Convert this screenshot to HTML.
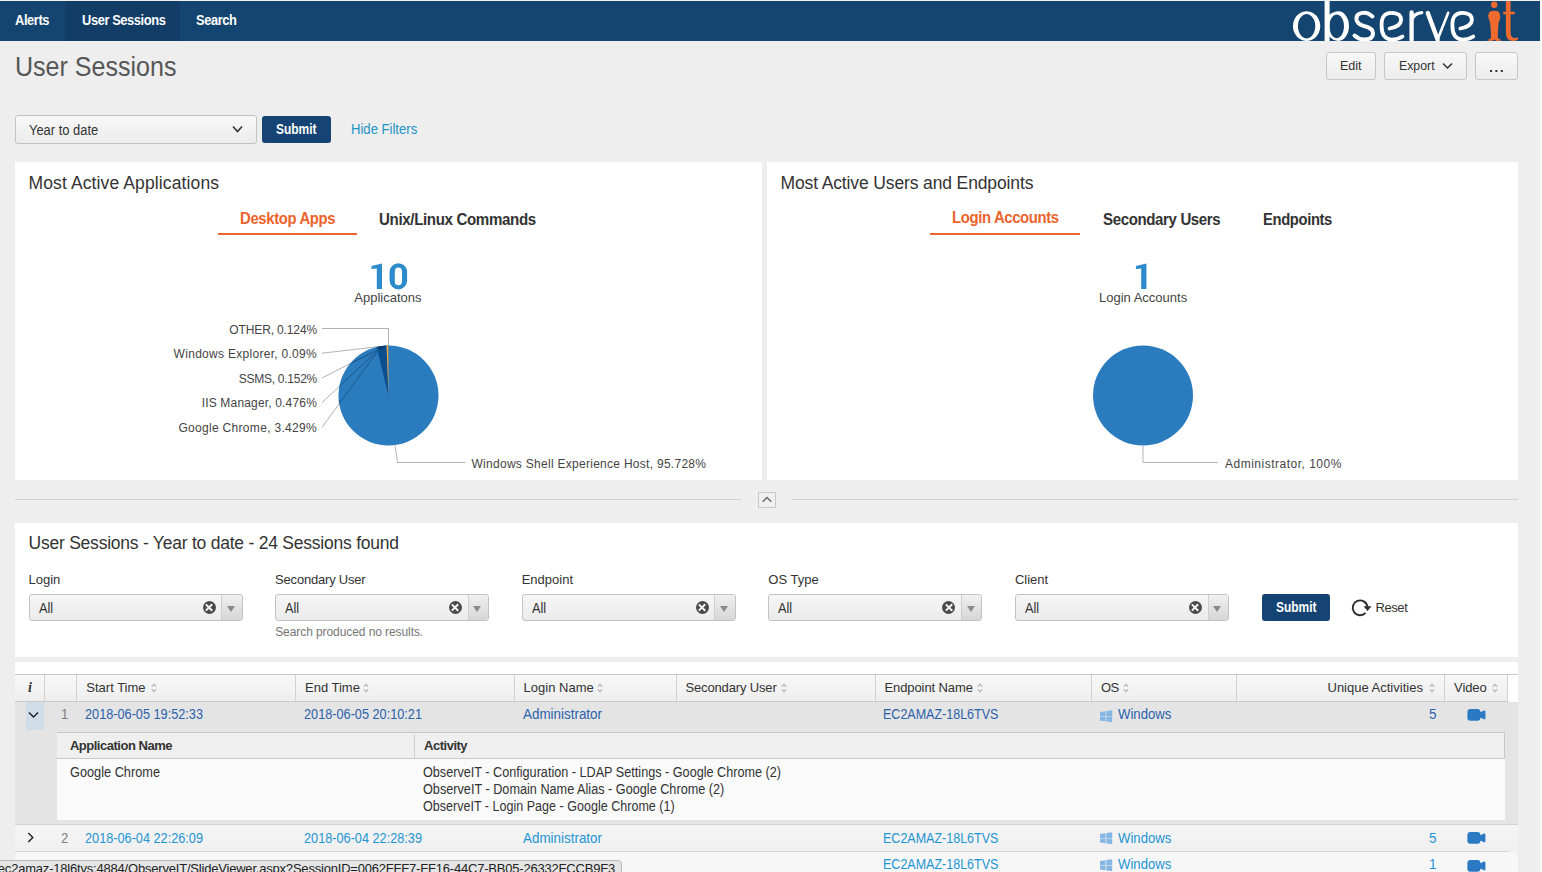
<!DOCTYPE html>
<html><head><meta charset="utf-8">
<style>
*{box-sizing:border-box;margin:0;padding:0}
html,body{width:1542px;height:872px;overflow:hidden;background:#eeeeee;font-family:"Liberation Sans",sans-serif;color:#333;position:relative}
.t{position:absolute;white-space:nowrap;line-height:1}
#nav{position:absolute;left:0;top:1px;width:1540px;height:40px;background:#144470}
#nav .t{color:#fff;font-size:14px;font-weight:bold;letter-spacing:-0.45px;top:11.6px;transform:scaleX(0.92);transform-origin:0 0}
#rstripe{position:absolute;left:1540px;top:0;width:2px;height:872px;background:#f7f7f7}
.btn{position:absolute;border:1px solid #c6c6c6;border-radius:3px;background:linear-gradient(#f8f8f8,#ececec)}
.pbtn{position:absolute;background:#154373;border-radius:3px}
.panel{position:absolute;background:#fff}
.ptitle{font-size:17.5px;color:#333}
.tab{font-size:15px;font-weight:bold;color:#333;letter-spacing:-0.4px}
.tab.on{color:#ec632b}
.uline{position:absolute;height:2.2px;background:#ec632b}
.big{font-size:36px;font-weight:bold;color:#2d8bcb}
.sub{font-size:13px;color:#444}
.lbl{font-size:12px;color:#444;letter-spacing:0.25px}
.flbl{font-size:13px;color:#333}
.inp{position:absolute;height:27px;border:1px solid #c3c3c3;border-radius:3px;background:linear-gradient(#f6f6f6,#ebebeb)}
.inp .t{left:9px;top:6.05px;font-size:14px;color:#333;transform:scaleX(0.91);transform-origin:0 0}
.inp .x{position:absolute;top:6.5px;width:13px;height:13px;border-radius:50%;background:#4a4a4a}
.inp .x:before,.inp .x:after{content:"";position:absolute;left:5.4px;top:2px;width:2.2px;height:9px;background:#f4f4f4;transform:rotate(45deg)}
.inp .x:after{transform:rotate(-45deg)}
.inp .sep{position:absolute;top:0;width:1px;height:25px;background:#cfcfcf}
.inp .dd{position:absolute;top:0;right:0;height:25px;background:linear-gradient(#f0f0f0,#d6d6d6);border-radius:0 3px 3px 0}
.inp .ar{position:absolute;top:11px;width:0;height:0;border-left:4px solid transparent;border-right:4px solid transparent;border-top:6px solid #8a8a8a}
.th{font-size:13px;color:#333}
.sort{position:absolute;width:6px;height:10px}
.lnk{font-size:13px;color:#1e95d4}
.lnk1{font-size:13px;color:#2b62ab}
.vline{position:absolute;width:1px;background:#cdcdcd}
.hline{position:absolute;height:1px;background:#cdcdcd}
</style></head>
<body>
<!-- NAV -->
<div id="nav">
  <div style="position:absolute;left:65px;top:0;width:114.5px;height:40px;background:#113d66"></div>
  <div class="t" style="left:15px">Alerts</div>
  <div class="t" style="left:81.5px">User Sessions</div>
  <div class="t" style="left:196px">Search</div>
</div>
<svg style="position:absolute;left:1285px;top:0" width="240" height="45" viewBox="1285 0 240 45">
  <g fill="#fff">
    <path fill-rule="evenodd" d="M1306.6 11.3 A13.7 14.8 0 1 0 1306.61 11.3 Z M1306.6 14 A8.7 12.2 0 1 1 1306.59 14 Z"/>
    <path d="M1324.6 1 L1329.6 1 L1329.6 41 L1324.6 41 Z"/>
    <path fill-rule="evenodd" d="M1329 15 Q1334 11.3 1338.5 11.3 A10.5 14.8 0 0 1 1338.5 40.9 Q1333 40.9 1329 36 Z M1336.7 14.4 A7.3 11.9 0 1 0 1336.71 14.4 Z"/>
  </g>
  <g fill="none" stroke="#fff" stroke-linecap="round">
    <path d="M1372.5 16.5 Q1368 12.5 1364 12.8 Q1356 13 1356.5 19.5 Q1357 24 1364 26 Q1373 28 1373 33.5 Q1373 39.5 1364 39.5 Q1359 39.5 1354.5 35.5" stroke-width="4"/>
    <path d="M1381.6 26 Q1381 12.8 1391.5 12.8 Q1401.5 13 1401 20.5 Q1400.5 26.5 1389.5 28.5 M1402.5 36.5 Q1398 39.6 1392 39.6 Q1381.6 39.2 1381.6 26" stroke-width="3.8"/>
    <path d="M1411.6 12.5 L1411.6 40" stroke-width="4.3"/><path d="M1412 19.5 Q1414.5 13 1421.8 12.6" stroke-width="3.2"/>
    <path d="M1427.8 13 L1437.6 39.6" stroke-width="4.4"/><path d="M1437.6 39.6 L1448.2 12.8" stroke-width="2.6"/>
    <path d="M1452.4 26 Q1451.8 12.8 1462.3 12.8 Q1472.3 13 1471.8 20.5 Q1471.3 26.5 1460.3 28.5 M1473.3 36.5 Q1468.8 39.6 1462.8 39.6 Q1452.4 39.2 1452.4 26" stroke-width="3.8"/>
  </g>
  <g fill="#ef6a2e">
    <circle cx="1494.2" cy="4.8" r="3.2"/>
    <path d="M1490 11.5 Q1494 10 1498.5 11.5 Q1500.8 14 1500.3 18 Q1499.5 21 1498.7 22 Q1497.8 30 1497.8 38 L1501.8 40.5 L1496.5 41 L1494.3 39.5 L1492 41 L1487 40.5 L1491 38 Q1491 30 1490 22 Q1488.3 19 1488.2 16 Q1488.5 12.5 1490 11.5 Z"/>
  </g>
  <g fill="#ef6a2e"><path d="M1505.9 1 L1510.6 1 L1510.6 33 Q1510.8 37.4 1514.2 37.9 L1518 37.4 L1518 39.4 Q1515.5 40.9 1512.7 40.9 Q1505.9 40.6 1505.9 33 Z"/><path d="M1503.4 11.7 L1514.6 11.7 Q1515.6 13 1514.6 14.3 L1503.4 14.3 Q1502.4 13 1503.4 11.7 Z"/></g>
</svg>
<div id="rstripe"></div>

<!-- TITLE ROW -->
<div class="t" style="left:15px;color:#575757;top:52.50px;font-size:27.5px;transform:scaleX(0.9109);transform-origin:0 0">User Sessions</div>
<div class="btn" style="left:1326px;top:52px;width:49.5px;height:27.8px"></div>
<div class="t" style="left:1340px;top:59.27px;font-size:13.5px;transform:scaleX(0.9284);transform-origin:0 0">Edit</div>
<div class="btn" style="left:1384px;top:52px;width:82.5px;height:27.8px"></div>
<div class="t" style="left:1398.5px;top:59.27px;font-size:13.5px;transform:scaleX(0.9121);transform-origin:0 0">Export</div>
<svg style="position:absolute;left:1442px;top:62px" width="12" height="8"><path d="M1 1.5 L5.5 6 L10 1.5" fill="none" stroke="#333" stroke-width="1.5"/></svg>
<div class="btn" style="left:1475px;top:52px;width:42.5px;height:27.8px"></div>
<div style="position:absolute;left:1490px;top:70px;width:2px;height:2px;background:#333;box-shadow:5.4px 0 #333,10.8px 0 #333"></div>

<!-- FILTER ROW -->
<div class="btn" style="left:15px;top:115.3px;width:241.5px;height:28.9px;border-color:#c2c2c2"></div>
<div class="t" style="left:29px;top:123.15px;font-size:14px;transform:scaleX(0.9227);transform-origin:0 0">Year to date</div>
<svg style="position:absolute;left:232px;top:125px" width="12" height="9"><path d="M1 1.5 L5.5 6.5 L10 1.5" fill="none" stroke="#333" stroke-width="1.6"/></svg>
<div class="pbtn" style="left:262px;top:115.5px;width:68.5px;height:27.5px"></div>
<div class="t" style="left:276px;color:#fff;top:121.95px;font-size:14px;font-weight:bold;transform:scaleX(0.8535);transform-origin:0 0">Submit</div>
<div class="t" style="left:351.3px;color:#1e93c6;top:121.60px;font-size:14.5px;transform:scaleX(0.9028);transform-origin:0 0">Hide Filters</div>

<!-- PANELS -->
<div class="panel" style="left:15px;top:162px;width:747px;height:318px"></div>
<div class="panel" style="left:767px;top:162px;width:751px;height:318px"></div>

<div class="t ptitle" style="left:28.5px;top:175px;letter-spacing:0.12px">Most Active Applications</div>
<div class="t tab on" style="left:240px;top:209.50px;font-size:16.5px;font-weight:bold;transform:scaleX(0.9028);transform-origin:0 0">Desktop Apps</div>
<div class="uline" style="left:218px;top:233px;width:139px"></div>
<div class="t tab" style="left:379.3px;top:210.90px;font-size:16.5px;font-weight:bold;transform:scaleX(0.9162);transform-origin:0 0">Unix/Linux Commands</div>

<svg style="position:absolute;left:0;top:0;overflow:visible" width="1" height="1"><g fill="#2d8bcb"><path d="M376.8 288.9 L382.0 288.9 L382.0 263.5 L371.5 265.9 L371.5 269.1 L376.8 268.5 Z"/><path fill-rule="evenodd" d="M389.6 272 A8.75 8.8 0 0 1 407.1 272 L407.1 280.6 A8.75 8.8 0 0 1 389.6 280.6 Z M394.8 271.2 A3.6 3.8 0 0 1 402 271.2 L402 281.4 A3.6 3.8 0 0 1 394.8 281.4 Z"/><path d="M1141.2 288.9 L1146.4 288.9 L1146.4 263.5 L1135.9 265.9 L1135.9 269.1 L1141.2 268.5 Z"/></g></svg>
<div class="t sub" style="left:354.3px;top:291.3px">Applicatons</div>

<svg style="position:absolute;left:0;top:0" width="1542" height="872">
  <circle cx="388.5" cy="395.5" r="50" fill="#2b7bbf"/>
  <path d="M388.5 395.5 L376.5 347 A50 50 0 0 1 386.5 345.55 Z" fill="#0c4f8f"/>
  <path d="M388.5 395.5 L386.6 345.55 A50 50 0 0 1 388.3 345.5 Z" fill="#f5a43a"/>
  <path d="M376.5 347 L386.5 345.55 L381 350 Z" fill="#0a3563" opacity="0.8"/>
  <g stroke="rgba(0,0,0,0.3)" stroke-width="1" fill="none">
    <path d="M322 328.5 L388.5 328.5 L388.5 345.5"/>
    <path d="M322 353.2 L377 346.8"/>
    <path d="M322 378 L377 350"/>
    <path d="M322 402.7 L377 351"/>
    <path d="M322 427.3 L377 352.2"/>
    <path d="M395 445.5 L397.6 462.5 L465.6 462.5"/>
  </g>
  <g stroke="#1d4a78" stroke-width="1" fill="none" opacity="0.8">
    <path d="M338.5 401 L340 401"/>
  </g>
  <circle cx="1143" cy="395.5" r="50" fill="#2b7bbf"/>
  <path d="M1143 445.5 L1143 462.5 L1218 462.5" stroke="#b4b4b4" stroke-width="1" fill="none"/>
</svg>
<div class="t lbl" style="right:1225px;top:323.7px;letter-spacing:-0.13px">OTHER, 0.124%</div>
<div class="t lbl" style="right:1225px;top:348.1px;letter-spacing:0.29px">Windows Explorer, 0.09%</div>
<div class="t lbl" style="right:1225px;top:372.8px;letter-spacing:-0.25px">SSMS, 0.152%</div>
<div class="t lbl" style="right:1225px;top:397.2px;letter-spacing:0.17px">IIS Manager, 0.476%</div>
<div class="t lbl" style="right:1225px;top:421.6px;letter-spacing:0.31px">Google Chrome, 3.429%</div>
<div class="t lbl" style="left:471.5px;top:457.7px;letter-spacing:0.28px">Windows Shell Experience Host, 95.728%</div>

<div class="t ptitle" style="left:780.5px;top:175px;letter-spacing:-0.13px">Most Active Users and Endpoints</div>
<div class="t tab on" style="left:952.4px;top:209.30px;font-size:16.5px;font-weight:bold;transform:scaleX(0.9012);transform-origin:0 0">Login Accounts</div>
<div class="uline" style="left:930px;top:233px;width:150px"></div>
<div class="t tab" style="left:1102.8px;top:210.80px;font-size:16.5px;font-weight:bold;transform:scaleX(0.9108);transform-origin:0 0">Secondary Users</div>
<div class="t tab" style="left:1263.4px;top:210.80px;font-size:16.5px;font-weight:bold;transform:scaleX(0.8952);transform-origin:0 0">Endpoints</div>

<div class="t sub" style="left:1099px;top:291.3px">Login Accounts</div>
<div class="t lbl" style="left:1225px;top:457.7px;letter-spacing:0.5px">Administrator, 100%</div>

<!-- DIVIDER -->
<div class="hline" style="left:15px;top:499px;width:726px;background:#cfcfcf"></div>
<div class="hline" style="left:792px;top:499px;width:726px;background:#cfcfcf"></div>
<div style="position:absolute;left:758px;top:492px;width:18px;height:16px;border:1px solid #cacaca;background:#f0f0f0"></div>
<svg style="position:absolute;left:758px;top:492px" width="18" height="16"><path d="M4.7 9.8 L9 5.5 L13.3 9.8" fill="none" stroke="#666" stroke-width="1.4"/></svg>

<!-- FILTER PANEL -->
<div class="panel" style="left:15px;top:523px;width:1503px;height:134px"></div>
<div class="t ptitle" style="left:28.5px;top:535.3px;letter-spacing:-0.23px">User Sessions - Year to date - 24 Sessions found</div>
<div class="t flbl" style="left:28.5px;top:573.1px;">Login</div>
<div class="inp" style="left:28.5px;top:593.8px;width:214px"><div class="t">All</div><div class="x" style="left:173.0px"></div><div class="dd" style="left:192.2px"></div><div class="sep" style="left:191.7px"></div><div class="ar" style="left:197.3px"></div></div>
<div class="t flbl" style="left:275.1px;top:573.1px;letter-spacing:-0.2px;">Secondary User</div>
<div class="inp" style="left:275.1px;top:593.8px;width:214px"><div class="t">All</div><div class="x" style="left:173.0px"></div><div class="dd" style="left:192.2px"></div><div class="sep" style="left:191.7px"></div><div class="ar" style="left:197.3px"></div></div>
<div class="t flbl" style="left:521.7px;top:573.1px;">Endpoint</div>
<div class="inp" style="left:521.7px;top:593.8px;width:214px"><div class="t">All</div><div class="x" style="left:173.0px"></div><div class="dd" style="left:192.2px"></div><div class="sep" style="left:191.7px"></div><div class="ar" style="left:197.3px"></div></div>
<div class="t flbl" style="left:768.3px;top:573.1px;">OS Type</div>
<div class="inp" style="left:768.3px;top:593.8px;width:214px"><div class="t">All</div><div class="x" style="left:173.0px"></div><div class="dd" style="left:192.2px"></div><div class="sep" style="left:191.7px"></div><div class="ar" style="left:197.3px"></div></div>
<div class="t flbl" style="left:1014.9px;top:573.1px;">Client</div>
<div class="inp" style="left:1014.9px;top:593.8px;width:214px"><div class="t">All</div><div class="x" style="left:173.0px"></div><div class="dd" style="left:192.2px"></div><div class="sep" style="left:191.7px"></div><div class="ar" style="left:197.3px"></div></div>
<div class="t" style="left:275.2px;top:626.3px;font-size:12px;color:#777;letter-spacing:-0.08px">Search produced no results.</div>
<div class="pbtn" style="left:1262px;top:593.8px;width:68.3px;height:27.2px"></div>
<div class="t" style="left:1275.7px;color:#fff;top:599.75px;font-size:14px;font-weight:bold;transform:scaleX(0.8535);transform-origin:0 0">Submit</div>
<svg style="position:absolute;left:1350px;top:597px" width="24" height="22"><path d="M15.5 15.9 A7.4 7.4 0 1 1 17.4 9.6" fill="none" stroke="#2a2a2a" stroke-width="1.9"/><path d="M13.6 9.3 L21.5 9.3 L17.5 13.9 Z" fill="#2a2a2a"/></svg>
<div class="t" style="left:1375.4px;top:600.6px;font-size:13px;color:#333;letter-spacing:-0.4px">Reset</div>
<div class="panel" style="left:15px;top:662px;width:1503px;height:210px"></div>
<div style="position:absolute;left:15px;top:674px;width:1493px;height:27.5px;background:linear-gradient(#f8f8f8,#eeeeee)"></div>
<div class="hline" style="left:15px;top:674px;width:1503px;background:#c9c9c9"></div>
<div class="hline" style="left:15px;top:700.6px;width:1493px;background:#c9c9c9"></div>
<div class="vline" style="left:43.7px;top:675px;height:26px;background:#d2d2d2"></div>
<div class="vline" style="left:75.9px;top:675px;height:26px;background:#d2d2d2"></div>
<div class="vline" style="left:295.2px;top:675px;height:26px;background:#d2d2d2"></div>
<div class="vline" style="left:513.7px;top:675px;height:26px;background:#d2d2d2"></div>
<div class="vline" style="left:675.9px;top:675px;height:26px;background:#d2d2d2"></div>
<div class="vline" style="left:874.5px;top:675px;height:26px;background:#d2d2d2"></div>
<div class="vline" style="left:1091.2px;top:675px;height:26px;background:#d2d2d2"></div>
<div class="vline" style="left:1235.7px;top:675px;height:26px;background:#d2d2d2"></div>
<div class="vline" style="left:1443.9px;top:675px;height:26px;background:#d2d2d2"></div>
<div class="vline" style="left:1507.0px;top:675px;height:26px;background:#d2d2d2"></div>
<div class="t" style="left:28px;top:680.5px;font-family:'Liberation Serif',serif;font-style:italic;font-weight:bold;font-size:14px;color:#333">i</div>
<div class="t th" style="left:86.3px;top:681px;letter-spacing:0px">Start Time</div>
<svg class="sort" style="left:151.4px;top:682.5px" width="7" height="11" viewBox="0 0 7 11"><path d="M0.9 4 L3.5 1.3 L6.1 4 M0.9 7 L3.5 9.7 L6.1 7" fill="none" stroke="#b0b0b0" stroke-width="1.3"/></svg>
<div class="t th" style="left:305px;top:681px;letter-spacing:0px">End Time</div>
<svg class="sort" style="left:363.2px;top:682.5px" width="7" height="11" viewBox="0 0 7 11"><path d="M0.9 4 L3.5 1.3 L6.1 4 M0.9 7 L3.5 9.7 L6.1 7" fill="none" stroke="#b0b0b0" stroke-width="1.3"/></svg>
<div class="t th" style="left:523.6px;top:681px;letter-spacing:0px">Login Name</div>
<svg class="sort" style="left:596.7px;top:682.5px" width="7" height="11" viewBox="0 0 7 11"><path d="M0.9 4 L3.5 1.3 L6.1 4 M0.9 7 L3.5 9.7 L6.1 7" fill="none" stroke="#b0b0b0" stroke-width="1.3"/></svg>
<div class="t th" style="left:685.5px;top:681px;letter-spacing:-0.15px">Secondary User</div>
<svg class="sort" style="left:780.7px;top:682.5px" width="7" height="11" viewBox="0 0 7 11"><path d="M0.9 4 L3.5 1.3 L6.1 4 M0.9 7 L3.5 9.7 L6.1 7" fill="none" stroke="#b0b0b0" stroke-width="1.3"/></svg>
<div class="t th" style="left:884.5px;top:681px;letter-spacing:-0.1px">Endpoint Name</div>
<svg class="sort" style="left:977.2px;top:682.5px" width="7" height="11" viewBox="0 0 7 11"><path d="M0.9 4 L3.5 1.3 L6.1 4 M0.9 7 L3.5 9.7 L6.1 7" fill="none" stroke="#b0b0b0" stroke-width="1.3"/></svg>
<div class="t th" style="left:1101px;top:681px;letter-spacing:-0.5px">OS</div>
<svg class="sort" style="left:1122.9px;top:682.5px" width="7" height="11" viewBox="0 0 7 11"><path d="M0.9 4 L3.5 1.3 L6.1 4 M0.9 7 L3.5 9.7 L6.1 7" fill="none" stroke="#b0b0b0" stroke-width="1.3"/></svg>
<div class="t th" style="left:1327.5px;top:681px;letter-spacing:0px">Unique Activities</div>
<svg class="sort" style="left:1429.2px;top:682.5px" width="7" height="11" viewBox="0 0 7 11"><path d="M0.9 4 L3.5 1.3 L6.1 4 M0.9 7 L3.5 9.7 L6.1 7" fill="none" stroke="#b0b0b0" stroke-width="1.3"/></svg>
<div class="t th" style="left:1454.1px;top:681px;letter-spacing:-0.1px">Video</div>
<svg class="sort" style="left:1491.7px;top:682.5px" width="7" height="11" viewBox="0 0 7 11"><path d="M0.9 4 L3.5 1.3 L6.1 4 M0.9 7 L3.5 9.7 L6.1 7" fill="none" stroke="#b0b0b0" stroke-width="1.3"/></svg>
<div style="position:absolute;left:15px;top:701.5px;width:1503px;height:123px;background:#e4e4e4"></div>
<div style="position:absolute;left:26.2px;top:701.5px;width:17.6px;height:28px;background:#d0dce7"></div>
<svg style="position:absolute;left:27px;top:709.8px" width="12" height="10"><path d="M2 2.5 L6.5 6.9 L11 2.5" fill="none" stroke="#222" stroke-width="1.45"/></svg>
<div class="t" style="left:60.8px;color:#808080;top:707.15px;font-size:14px;transform:scaleX(0.9363);transform-origin:0 0">1</div>
<div class="t lnk1" style="left:85.1px;top:707.15px;font-size:14px;transform:scaleX(0.9077);transform-origin:0 0">2018-06-05 19:52:33</div>
<div class="t lnk1" style="left:303.9px;top:707.15px;font-size:14px;transform:scaleX(0.9077);transform-origin:0 0">2018-06-05 20:10:21</div>
<div class="t lnk1" style="left:523px;top:707.15px;font-size:14px;transform:scaleX(0.9579);transform-origin:0 0">Administrator</div>
<div class="t lnk1" style="left:882.6px;top:707.15px;font-size:14px;transform:scaleX(0.8934);transform-origin:0 0">EC2AMAZ-18L6TVS</div>
<svg style="position:absolute;left:1099.8px;top:709.6px" width="13" height="13" viewBox="0 0 13 13"><path d="M0 2 L5.6 1.2 L5.6 5.9 L0 5.9 Z M6.3 1.1 L12.2 0.3 L12.2 5.9 L6.3 5.9 Z M0 6.6 L5.6 6.6 L5.6 11.3 L0 10.5 Z M6.3 6.6 L12.2 6.6 L12.2 12.2 L6.3 11.4 Z" fill="#86b6e4"/></svg>
<div class="t lnk1" style="left:1118.4px;top:707.15px;font-size:14px;transform:scaleX(0.9384);transform-origin:0 0">Windows</div>
<div class="t lnk1" style="left:1428.7px;top:707.15px;font-size:14px;transform:scaleX(0.9619);transform-origin:0 0">5</div>
<svg style="position:absolute;left:1466.5px;top:709.1999999999999px" width="19" height="12" viewBox="0 0 19 12"><rect x="0.4" y="0" width="13" height="11.8" rx="3" fill="#2b79c3"/><path d="M12.5 3.6 L17.2 1.5 Q18.4 1.1 18.4 2.4 L18.4 9.4 Q18.4 10.7 17.2 10.3 L12.5 8.2 Z" fill="#2b79c3"/></svg>
<div style="position:absolute;left:57px;top:731.6px;width:1448px;height:88.4px;background:#fafafa;border-top:1px solid #cccccc"></div>
<div style="position:absolute;left:57px;top:731.6px;width:1448px;height:27.6px;background:#efefef;border:1px solid #c8c8c8;border-left:none"></div>
<div class="vline" style="left:414.3px;top:733.5px;height:25px;background:#d0d0d0"></div>
<div class="t" style="left:69.9px;top:739px;font-size:13px;font-weight:bold;color:#333;letter-spacing:-0.48px">Application Name</div>
<div class="t" style="left:424px;top:739px;font-size:13px;font-weight:bold;color:#333;letter-spacing:-0.48px">Activity</div>
<div class="t" style="left:69.9px;color:#333;top:765.15px;font-size:14px;transform:scaleX(0.9107);transform-origin:0 0">Google Chrome</div>
<div class="t" style="left:423px;color:#333;top:765.15px;font-size:14px;transform:scaleX(0.9033);transform-origin:0 0">ObserveIT - Configuration - LDAP Settings - Google Chrome (2)</div>
<div class="t" style="left:423px;color:#333;top:782.35px;font-size:14px;transform:scaleX(0.9055);transform-origin:0 0">ObserveIT - Domain Name Alias - Google Chrome (2)</div>
<div class="t" style="left:423px;color:#333;top:798.85px;font-size:14px;transform:scaleX(0.8968);transform-origin:0 0">ObserveIT - Login Page - Google Chrome (1)</div>
<div class="hline" style="left:15px;top:824px;width:1503px;background:#d4d4d4"></div>
<div style="position:absolute;left:15px;top:825px;width:1503px;height:26.5px;background:linear-gradient(#f5f5f5,#f0f0f0)"></div>
<div class="hline" style="left:15px;top:851.2px;width:1492.5px;background:#d2d2d2"></div>
<div style="position:absolute;left:15px;top:852px;width:1503px;height:20px;background:#f7f7f7"></div>
<svg style="position:absolute;left:26px;top:831px" width="10" height="13"><path d="M2.3 2 L6.8 6.5 L2.3 11" fill="none" stroke="#222" stroke-width="1.45"/></svg>
<div class="t" style="left:60.8px;color:#808080;top:830.65px;font-size:14px;transform:scaleX(0.9363);transform-origin:0 0">2</div>
<div class="t lnk" style="left:85.1px;top:830.65px;font-size:14px;transform:scaleX(0.9077);transform-origin:0 0">2018-06-04 22:26:09</div>
<div class="t lnk" style="left:303.9px;top:830.65px;font-size:14px;transform:scaleX(0.9077);transform-origin:0 0">2018-06-04 22:28:39</div>
<div class="t lnk" style="left:523px;top:830.65px;font-size:14px;transform:scaleX(0.9579);transform-origin:0 0">Administrator</div>
<div class="t lnk" style="left:882.6px;top:830.65px;font-size:14px;transform:scaleX(0.8934);transform-origin:0 0">EC2AMAZ-18L6TVS</div>
<svg style="position:absolute;left:1099.8px;top:832px" width="13" height="13" viewBox="0 0 13 13"><path d="M0 2 L5.6 1.2 L5.6 5.9 L0 5.9 Z M6.3 1.1 L12.2 0.3 L12.2 5.9 L6.3 5.9 Z M0 6.6 L5.6 6.6 L5.6 11.3 L0 10.5 Z M6.3 6.6 L12.2 6.6 L12.2 12.2 L6.3 11.4 Z" fill="#86b6e4"/></svg>
<div class="t lnk" style="left:1118.4px;top:830.65px;font-size:14px;transform:scaleX(0.9384);transform-origin:0 0">Windows</div>
<div class="t lnk" style="left:1428.7px;top:830.65px;font-size:14px;transform:scaleX(0.9619);transform-origin:0 0">5</div>
<svg style="position:absolute;left:1466.5px;top:832.3px" width="19" height="12" viewBox="0 0 19 12"><rect x="0.4" y="0" width="13" height="11.8" rx="3" fill="#2b79c3"/><path d="M12.5 3.6 L17.2 1.5 Q18.4 1.1 18.4 2.4 L18.4 9.4 Q18.4 10.7 17.2 10.3 L12.5 8.2 Z" fill="#2b79c3"/></svg>
<div class="t lnk" style="left:882.6px;top:857.15px;font-size:14px;transform:scaleX(0.8934);transform-origin:0 0">EC2AMAZ-18L6TVS</div>
<svg style="position:absolute;left:1099.8px;top:859.2px" width="13" height="13" viewBox="0 0 13 13"><path d="M0 2 L5.6 1.2 L5.6 5.9 L0 5.9 Z M6.3 1.1 L12.2 0.3 L12.2 5.9 L6.3 5.9 Z M0 6.6 L5.6 6.6 L5.6 11.3 L0 10.5 Z M6.3 6.6 L12.2 6.6 L12.2 12.2 L6.3 11.4 Z" fill="#86b6e4"/></svg>
<div class="t lnk" style="left:1118.4px;top:857.15px;font-size:14px;transform:scaleX(0.9384);transform-origin:0 0">Windows</div>
<div class="t lnk" style="left:1428.7px;top:857.15px;font-size:14px;transform:scaleX(0.9619);transform-origin:0 0">1</div>
<svg style="position:absolute;left:1466.5px;top:859.5px" width="19" height="12" viewBox="0 0 19 12"><rect x="0.4" y="0" width="13" height="11.8" rx="3" fill="#2b79c3"/><path d="M12.5 3.6 L17.2 1.5 Q18.4 1.1 18.4 2.4 L18.4 9.4 Q18.4 10.7 17.2 10.3 L12.5 8.2 Z" fill="#2b79c3"/></svg>
<div style="position:absolute;left:-5px;top:859.5px;width:626.5px;height:20px;background:#e5e5e5;border:1px solid #b9b9b9;border-radius:0 4px 0 0"></div>
<div class="t" style="right:927px;top:862px;font-size:13px;color:#222;letter-spacing:-0.2px">ec2amaz-18l6tvs:4884/ObserveIT/SlideViewer.aspx?SessionID=0062FFF7-FF16-44C7-BB05-26332FCCB9F3</div>
</body></html>
